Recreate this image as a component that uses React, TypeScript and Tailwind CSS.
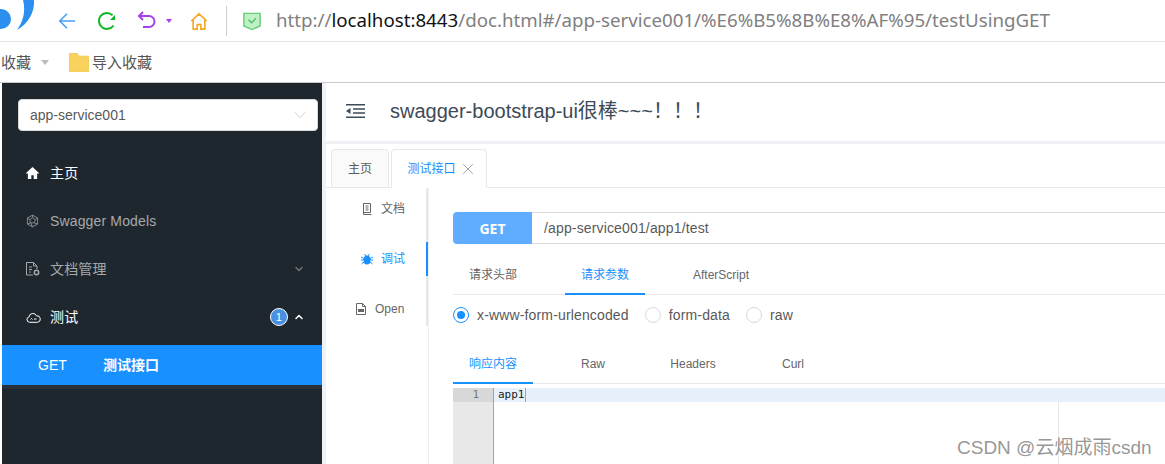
import { ChevronDown, ChevronUp, X } from 'lucide-react';

const sans = "font-['Liberation_Sans','Noto_Sans_CJK_SC',sans-serif]";

function BrowserBar() {
  return (
    <div className="flex h-[42px] items-center border-b border-[#e4e4e4] bg-white">
      {/* logo, cut off by the top left corner */}
      <svg width="36" height="41" viewBox="0 0 36 41" className="shrink-0 self-start">
        <circle cx="1" cy="19" r="10" fill="#2b8ff0" />
        <path d="M23 0h11c1 12-6 24-17 30 6-8 9-19 6-30z" fill="#2b8ff0" />
      </svg>
      <svg width="18" height="18" viewBox="0 0 20 20" className="ml-[22px] shrink-0" fill="none" stroke="#4a9ff5" strokeWidth="1.8">
        <path d="M19 10H2M10 2l-8 8 8 8" />
      </svg>
      <svg width="20" height="20" viewBox="0 0 20 20" className="ml-[21px] shrink-0" fill="none" stroke="#0fb726" strokeWidth="2">
        <path d="M16.500 14.500A8 8 0 1 1 15.500 4.200" />
        <path d="M18 9h-5l5-5z" fill="#0fb726" stroke="none" />
      </svg>
      <svg width="20" height="20" viewBox="0 0 20 20" className="ml-[20px] shrink-0" fill="none" stroke="#a63ff0" strokeWidth="2">
        <path d="M2 5h10a5.500 5.500 0 0 1 0 11H6" />
        <path d="M6 1 2 5l4 4" />
      </svg>
      <div className="ml-[9px] h-0 w-0 shrink-0 border-x-[3px] border-t-[4px] border-x-transparent border-t-[#a63ff0]" />
      <svg width="18" height="20" viewBox="0 0 20 20" className="ml-[18px] shrink-0" fill="none" stroke="#f5a623" strokeWidth="1.8">
        <path d="M1.500 10 10 2l8.500 8M3.500 9v10h4.500v-5h4v5h4.500V9" />
      </svg>
      <div className="ml-[18px] h-[30px] w-px shrink-0 bg-[#cfcfcf]" />
      <svg width="18" height="20" viewBox="0 0 20 21" className="ml-[16px] shrink-0">
        <path d="M1 2h18v14l-9 4-9-4z" fill="#bff0c6" stroke="#63cf78" strokeWidth="1.600" />
        <path d="m6 9 3.500 3.500L14.500 7.500" fill="none" stroke="#4cbf63" strokeWidth="1.500" />
      </svg>
      <div className="ml-[15px] whitespace-nowrap font-['Noto_Sans',sans-serif] text-[18.7px] text-[#808080]">
        http://<span className="text-[#111]">localhost:8443</span>/doc.html#/app-service001/%E6%B5%8B%E8%AF%95/testUsingGET
      </div>
    </div>
  );
}

function BookmarkBar() {
  return (
    <div className="flex h-[41px] items-center border-b border-[#c9c9c9] bg-white font-['Noto_Sans_CJK_SC',sans-serif] text-[15px] text-[#555]">
      <span className="ml-[1px]">收藏</span>
      <div className="ml-[10px] h-0 w-0 border-x-[4px] border-t-[5px] border-x-transparent border-t-[#bbb]" />
      <svg width="20" height="19" viewBox="0 0 20 19" className="ml-[20px] shrink-0">
        <path d="M0 1a1 1 0 0 1 1-1h7l2 3h10v16H0z" fill="#f8d25c" stroke="#f2c46a" strokeWidth="0.600" />
      </svg>
      <span className="ml-[3px]">导入收藏</span>
    </div>
  );
}

function SideItem({ icon, label, active, right }: { icon: React.ReactNode; label: string; active?: boolean; right?: React.ReactNode }) {
  return (
    <div className={`flex h-[48px] items-center pl-[24px] pr-[17px] text-[14px] tracking-[0.15px] ${active ? 'text-white' : 'text-[#a6a9ac]'}`}>
      <div className="flex w-[24px] shrink-0 items-center">{icon}</div>
      <span>{label}</span>
      <div className="ml-auto flex items-center gap-[5px]">{right}</div>
    </div>
  );
}

function Sidebar() {
  return (
    <div className={`flex w-[320px] shrink-0 flex-col bg-[#1f272e] ${sans}`}>
      <div className="pl-[16px] pr-[4px] pt-[16px]">
        <div className="flex h-[32px] items-center justify-between rounded-[4px] border border-[#d9d9d9] bg-white pl-[11px] pr-[7px] text-[14px] text-[#595959]">
          <span>app-service001</span>
          <ChevronDown size={20} strokeWidth={0.9} color="#bfbfbf" />
        </div>
      </div>
      <div className="mt-[18px]">
        <SideItem
          active
          label="主页"
          icon={
            <svg width="13" height="12" viewBox="0 0 14 13" fill="#fff">
              <path d="M7 0 0 6.500l1 1L2 6.700V13h3.700V9h2.600v4H12V6.700l1 .8 1-1z" />
            </svg>
          }
        />
        <SideItem
          label="Swagger Models"
          icon={
            <svg width="13" height="14" viewBox="0 0 14 14" fill="none" stroke="#8c9094" strokeWidth="1">
              <path d="M7 .7 12.500 3.800v6.400L7 13.300 1.500 10.200V3.800zM7 3.500 10 5.500 9 9H5L4 5.500zM7 .7v2.800M12.500 3.800 10 5.500M12.500 10.200 9 9M7 13.300 5 9M1.500 10.200 5 9M1.500 3.800 4 5.500" />
            </svg>
          }
        />
        <SideItem
          label="文档管理"
          icon={
            <svg width="14" height="14" viewBox="0 0 14 14" fill="none" stroke="#a6a9ac" strokeWidth="1">
              <path d="M7 13H.500V.500h7L11 4v3M7.500.500V4H11M3 5h3M3 7.500h3M3 10h2" />
              <circle cx="10.500" cy="10.500" r="2.200" strokeWidth="1.500" />
            </svg>
          }
          right={<ChevronDown size={12} strokeWidth={3} color="#6e7377" />}
        />
        <SideItem
          active
          label="测试"
          icon={
            <svg width="15" height="11" viewBox="0 0 15 11" fill="none" stroke="#fff" strokeWidth="1">
              <path d="M3.500 10.300a2.800 2.800 0 0 1-.4-5.500 3.800 3.800 0 0 1 7.300-1 3.300 3.300 0 0 1 1.200 6.500zM4.500 7.500l1-1 1 1M8 7h2.500" />
            </svg>
          }
          right={
            <>
              <span className="flex h-[18px] w-[18px] items-center justify-center rounded-full border border-white bg-[#4a90e2] text-[11px] text-white">1</span>
              <ChevronUp size={12} strokeWidth={3} color="#fff" />
            </>
          }
        />
      </div>
      <div className="mt-[4px] flex h-[40px] items-center bg-[#1890ff] pl-[36px] text-[14px] text-white">
        <span className="w-[65px]">GET</span>
        <span className="font-bold">测试接口</span>
      </div>
      <div className="h-[4px] bg-[#283038]" />
    </div>
  );
}

function Header() {
  return (
    <div className="flex h-[61px] shrink-0 items-center border-b-[3px] border-[#eef0f3] bg-white pb-[2px] pl-[20px]">
      <svg width="19" height="14" viewBox="0 0 19 14" fill="#3d4a57">
        <path d="M0 0h19v1.600H0zM7 4.200h12v1.600H7zM7 8.200h12v1.600H7zM0 12.400h19V14H0zM4.500 4v6L0 7z" />
      </svg>
      <span className={`ml-[25px] text-[20px] text-[#3d4a57] ${sans}`}>swagger-bootstrap-ui很棒~~~！！！</span>
    </div>
  );
}

function Tabs() {
  return (
    <div className="flex h-[44px] shrink-0 items-end gap-[2px] border-b border-[#e8e8e8] pl-[5px] text-[12px]">
      <div className="-mb-px flex h-[39px] w-[58px] items-center justify-center rounded-t-[4px] border border-[#e8e8e8] bg-[#fafafa] text-[#595959]">主页</div>
      <div className="-mb-px flex h-[39px] w-[96px] items-center justify-center gap-[3px] rounded-t-[4px] border border-b-white border-[#e8e8e8] bg-white pl-[6px] text-[#1890ff]">
        测试接口
        <X size={18} strokeWidth={0.9} color="#777" />
      </div>
    </div>
  );
}

function SideTab({ icon, label, active, small }: { icon: React.ReactNode; label: string; active?: boolean; small?: boolean }) {
  return (
    <div className={`flex h-[34px] items-center justify-end text-[12px] ${active ? 'border-r-2 border-[#1890ff] pr-[21px] text-[#1890ff]' : 'pr-[21px] text-[#666]'}`}>
      {icon}
      <span className={small ? 'ml-[9px] w-[30px]' : active ? 'ml-[8px] w-[24px]' : 'ml-[9px] w-[24px]'}>{label}</span>
    </div>
  );
}

function SideTabs() {
  return (
    <div className="flex w-[103px] shrink-0 flex-col self-stretch border-r border-[#efefef]">
      <div className="flex h-[138px] flex-col gap-[16px] border-r-2 border-[#e8e8e8] pt-[4px]">
        <SideTab
          label="文档"
          icon={
            <svg width="11" height="12" viewBox="0 0 11 12" fill="none" stroke="#666">
              <path d="M2.500.500h7v9h-7zM2.500.500v11h8M4.500 3h3M4.500 5h3M4.500 7h3" />
            </svg>
          }
        />
        <div className="-mr-[2px]">
          <SideTab
            active
            label="调试"
            icon={
              <svg width="12" height="12" viewBox="0 0 12 12" fill="#1890ff">
                <ellipse cx="6" cy="7" rx="3.500" ry="4.500" />
                <path d="M3.500 1 5 3M8.500 1 7 3M0 4l3 1.500M12 4 9 5.500M0 7h3M12 7H9M.5 11l2.500-2M11.500 11 9 9" stroke="#1890ff" />
              </svg>
            }
          />
        </div>
        <SideTab
          small
          label="Open"
          icon={
            <svg width="10" height="12" viewBox="0 0 10 12" fill="none" stroke="#666">
              <path d="M.500.500h6l3 3v8h-9zM6.500.500v3h3" />
              <path d="M2 6h6v3H2z" fill="#666" stroke="none" />
            </svg>
          }
        />
      </div>
    </div>
  );
}

function SubTabs({ items, active, widths }: { items: string[]; active: number; widths: string[] }) {
  return (
    <div className="flex h-[42px] border-b border-[#e8e8e8] text-[12px] text-[#666]">
      {items.map((t, i) => (
        <div
          key={t}
          className={`-mb-px flex items-center justify-center border-b-2 pt-[3px] ${widths[i]} ${i === active ? 'border-[#1890ff] text-[#1890ff]' : 'border-transparent'}`}
        >
          {t}
        </div>
      ))}
    </div>
  );
}

function Radio({ label, checked }: { label: string; checked?: boolean }) {
  return (
    <div className="flex items-center gap-[8px]">
      <span className={`flex h-[16px] w-[16px] items-center justify-center rounded-full border ${checked ? 'border-[#1890ff]' : 'border-[#d9d9d9]'}`}>
        {checked && <span className="h-[8px] w-[8px] rounded-full bg-[#1890ff]" />}
      </span>
      <span>{label}</span>
    </div>
  );
}

function Debug() {
  return (
    <div className="min-w-0 flex-1 pl-[24px] pt-[24px]">
      <div className="flex h-[32px]">
        <div className="flex w-[79px] shrink-0 items-center justify-center rounded-l-[4px] bg-[#60adff] font-['Open_Sans',sans-serif] text-[14px] font-bold text-white">GET</div>
        <div className="flex flex-1 items-center border-y border-[#d9d9d9] pl-[12px] text-[14px] tracking-[0.15px] text-[#595959]">/app-service001/app1/test</div>
      </div>
      <div className="mt-[9px]">
        <SubTabs items={['请求头部', '请求参数', 'AfterScript']} active={1} widths={['w-[80px] mr-[32px]', 'w-[80px] mr-[36px]', 'w-[80px]']} />
      </div>
      <div className="mt-[12px] flex h-[16px] items-center gap-[16px] text-[14px] tracking-[0.15px] text-[#595959]">
        <Radio checked label="x-www-form-urlencoded" />
        <Radio label="form-data" />
        <Radio label="raw" />
      </div>
      <div className="mt-[19px]">
        <SubTabs items={['响应内容', 'Raw', 'Headers', 'Curl']} active={0} widths={['w-[80px] mr-[20px]', 'w-[80px] mr-[20px]', 'w-[80px] mr-[20px]', 'w-[80px]']} />
      </div>
      <Editor />
    </div>
  );
}

function Editor() {
  return (
    <div className="mt-[4px] flex h-[80px] font-['DejaVu_Sans_Mono',monospace] text-[11px]">
      <div className="w-[41px] shrink-0 border-r border-[#a3a3a3] bg-[#e8e8e8]">
        <div className="h-[14px] bg-[#d8d8d8] pr-[14px] text-right leading-[14px] text-[#777]">1</div>
      </div>
      <div className="flex-1">
        <div className="flex h-[14px] items-center bg-[#e6f0fb] pl-[4px] leading-[14px] text-[#222]">
          app1
          <span className="h-[14px] w-[1px] bg-[#9aa5b0]" />
        </div>
        {/* print margin */}
        <div className="ml-[564px] h-[66px] w-px bg-[#e8e8e8]" />
      </div>
    </div>
  );
}

export default function App() {
  return (
    <div className={`relative h-[464px] w-[1165px] overflow-hidden bg-white ${sans}`}>
      <BrowserBar />
      <BookmarkBar />
      <div className="flex h-[381px] pl-[2px]">
        <Sidebar />
        <div className="w-[4px] shrink-0 bg-[#f0f2f5]" />
        <div className="flex min-w-0 flex-1 flex-col">
          <Header />
          <Tabs />
          <div className="flex min-h-0 flex-1">
            <SideTabs />
            <Debug />
          </div>
        </div>
      </div>
      {/* csdn watermark */}
      <div className="absolute left-[957px] top-[434px] whitespace-nowrap text-[19px] text-[#8a8a8a]/90">CSDN @云烟成雨csdn</div>
    </div>
  );
}
